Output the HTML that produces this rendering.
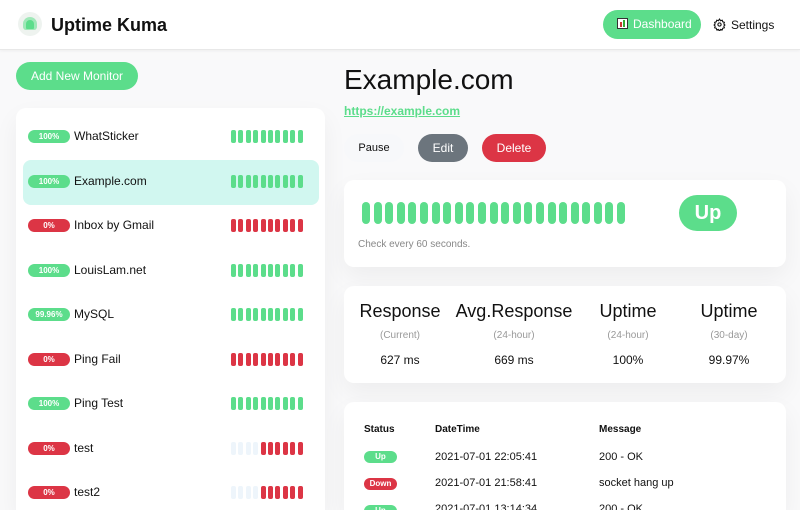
<!DOCTYPE html>
<html style="overflow:hidden;height:510px"><head><style>
*{box-sizing:border-box;margin:0;padding:0}
body{width:800px;height:510px;overflow:hidden;background:#f9f9fa;font-family:"Liberation Sans",sans-serif;color:#111;position:relative}
.abs{position:absolute}
header{position:absolute;left:0;top:0;width:800px;height:50px;background:#fff;border-bottom:1px solid #e8e8e8;box-shadow:0 1px 3px rgba(0,0,0,.05)}
.card{position:absolute;background:#fff;border-radius:10px;box-shadow:0 10px 25px rgba(0,0,0,.05)}
.badge{position:absolute;left:28px;width:42px;height:13px;border-radius:7px;color:#fff;font-size:8px;font-weight:bold;text-align:center;line-height:13px}
.g{background:#5cdd8b}.r{background:#dc3545}
.name{position:absolute;left:74px;font-size:12px}
.bars{position:absolute;left:231px;width:75px;height:13px}
.bars i{position:absolute;top:0;width:5px;height:13px;border-radius:2px}
.bars i.e{background:#eef5fb}
.bb{display:flex;gap:3.6px}
.bb i{display:block;width:8px;height:22px;border-radius:4px;background:#5cdd8b}
.st{position:absolute;text-align:center;width:120px}
.st b{display:block;font-weight:normal;font-size:18px}
.st s{display:block;text-decoration:none;font-size:10px;color:#999;margin-top:8px}
.st u{display:block;text-decoration:none;font-size:12px;margin-top:12px}
.t{position:absolute;font-size:11px}
.pill{position:absolute;left:364px;width:33px;height:12px;border-radius:6px;color:#fff;font-size:8px;font-weight:bold;text-align:center;line-height:12px}
</style></head><body>
<header>
<div class="abs" style="left:18px;top:12px;width:24px;height:24px;border-radius:50%;background:#eef3ef"></div>
<div class="abs" style="left:23px;top:17px;width:14px;height:13px;border-radius:7px 7px 3px 3px;background:#9fe8b8"></div>
<div class="abs" style="left:26px;top:20px;width:8px;height:9px;border-radius:4px 4px 1px 1px;background:#5cdd8b"></div>
<div class="abs" style="left:51px;top:15px;font-size:18px;font-weight:bold">Uptime Kuma</div>
<div class="abs" style="left:603px;top:10px;width:98px;height:29px;border-radius:15px;background:#5cdd8b;color:#fff;font-size:12px;line-height:29px;padding-left:30px">Dashboard</div>
<div class="abs" style="left:617px;top:18px;width:11px;height:11px;background:#fff;border:1px solid #333"><div class="abs" style="left:2px;bottom:1px;width:2px;height:5px;background:#c33"></div><div class="abs" style="left:5px;bottom:1px;width:2px;height:7px;background:#3a3"></div></div>
<svg class="abs" style="left:713px;top:18px" width="13" height="13" viewBox="0 0 24 24" fill="none" stroke="#111" stroke-width="2"><circle cx="12" cy="12" r="3"/><path d="M12 2l2 3 3-1 1 3 3 1-1 3 2 2-2 2 1 3-3 1-1 3-3-1-2 3-2-3-3 1-1-3-3-1 1-3-2-2 2-2-1-3 3-1 1-3 3 1z"/></svg>
<div class="abs" style="left:731px;top:18px;font-size:12px">Settings</div>
</header>
<div class="abs" style="left:16px;top:62px;width:122px;height:28px;border-radius:14px;background:#5cdd8b;color:#fff;font-size:12px;line-height:28px;text-align:center">Add New Monitor</div>
<div class="card" style="left:16px;top:108px;width:309px;height:402px;border-radius:10px 10px 0 0"></div>
<div class="abs" style="left:23px;top:160px;width:296px;height:45px;border-radius:8px;background:#d1f7f0"></div>
<div id="list"></div>

<div class="abs" style="left:344px;top:64px;font-size:28px">Example.com</div>
<div class="abs" style="left:344px;top:104px;font-size:12px;font-weight:bold;color:#5cdd8b;text-decoration:underline">https://example.com</div>
<div class="abs" style="left:344px;top:134px;width:60px;height:28px;border-radius:14px;background:#f7f8fa;font-size:11px;line-height:28px;text-align:center">Pause</div>
<div class="abs" style="left:418px;top:134px;width:50px;height:28px;border-radius:14px;background:#6c757d;color:#fff;font-size:12px;line-height:28px;text-align:center">Edit</div>
<div class="abs" style="left:482px;top:134px;width:64px;height:28px;border-radius:14px;background:#dc3545;color:#fff;font-size:12px;line-height:28px;text-align:center">Delete</div>

<div class="card" style="left:344px;top:180px;width:442px;height:87px"></div>
<div class="abs bb" style="left:362px;top:202px"><i></i><i></i><i></i><i></i><i></i><i></i><i></i><i></i><i></i><i></i><i></i><i></i><i></i><i></i><i></i><i></i><i></i><i></i><i></i><i></i><i></i><i></i><i></i></div>
<div class="abs" style="left:679px;top:195px;width:58px;height:36px;border-radius:18px;background:#5cdd8b;color:#fff;font-size:20px;font-weight:bold;text-align:center;line-height:36px">Up</div>
<div class="abs" style="left:358px;top:239px;font-size:10px;color:#888">Check every 60 seconds.</div>

<div class="card" style="left:344px;top:286px;width:442px;height:97px"></div>
<div class="st" style="left:340px;top:301px"><b>Response</b><s>(Current)</s><u>627 ms</u></div>
<div class="st" style="left:454px;top:301px"><b>Avg.Response</b><s>(24-hour)</s><u>669 ms</u></div>
<div class="st" style="left:568px;top:301px"><b>Uptime</b><s>(24-hour)</s><u>100%</u></div>
<div class="st" style="left:669px;top:301px"><b>Uptime</b><s>(30-day)</s><u>99.97%</u></div>

<div class="card" style="left:344px;top:402px;width:442px;height:108px;border-radius:10px 10px 0 0"></div>
<div class="t" style="left:364px;top:424px;font-weight:bold;font-size:10px">Status</div>
<div class="t" style="left:435px;top:424px;font-weight:bold;font-size:10px">DateTime</div>
<div class="t" style="left:599px;top:424px;font-weight:bold;font-size:10px">Message</div>
<div class="pill g" style="top:451px">Up</div><div class="t" style="left:435px;top:451px">2021-07-01 22:05:41</div><div class="t" style="left:599px;top:451px">200 - OK</div>
<div class="pill r" style="top:478px">Down</div><div class="t" style="left:435px;top:477px">2021-07-01 21:58:41</div><div class="t" style="left:599px;top:477px">socket hang up</div>
<div class="pill g" style="top:505px">Up</div><div class="t" style="left:435px;top:503px">2021-07-01 13:14:34</div><div class="t" style="left:599px;top:503px">200 - OK</div>

<script>
var items=[["100%","WhatSticker","g"],["100%","Example.com","g"],["0%","Inbox by Gmail","r"],["100%","LouisLam.net","g"],["99.96%","MySQL","g"],["0%","Ping Fail","r"],["100%","Ping Test","g"],["0%","test","t"],["0%","test2","t"]];
var h="";
items.forEach(function(it,i){var y=Math.round(136+i*44.5);var c=it[2]=="g"?"g":"r";
h+='<div class="badge '+c+'" style="top:'+(y-6)+'px">'+it[0]+'</div><div class="name" style="top:'+(y-7)+'px">'+it[1]+'</div><div class="bars" style="top:'+(y-6)+'px">';
for(var k=0;k<10;k++){var col=it[2]=="g"?"#5cdd8b":"#dc3545";var e=it[2]=="t"&&k<4;var x=Math.round(k*7.4);h+='<i class="'+(e?'e':'')+'" style="left:'+x+'px;'+(e?'':'background:'+col)+'"></i>';}
h+='</div>';});
document.getElementById("list").innerHTML=h;
</script>
</body></html>
